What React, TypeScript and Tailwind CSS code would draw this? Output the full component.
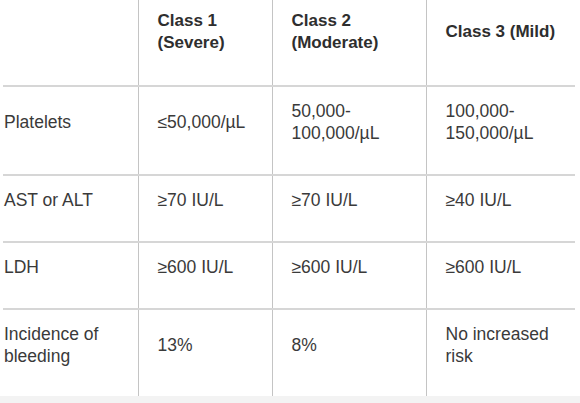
import React from 'react';

const rows = [
  { label: ['Platelets'], cells: [['≤50,000/µL'], ['50,000-', '100,000/µL'], ['100,000-', '150,000/µL']] },
  { label: ['AST or ALT'], cells: [['≥70 IU/L'], ['≥70 IU/L'], ['≥40 IU/L']] },
  { label: ['LDH'], cells: [['≥600 IU/L'], ['≥600 IU/L'], ['≥600 IU/L']] },
  { label: ['Incidence of', 'bleeding'], cells: [['13%'], ['8%'], ['No increased', 'risk']] },
];

const Lines = ({ lines }: { lines: string[] }) => (
  <p className="mb-4">
    {lines.map((l, i) => (
      <React.Fragment key={i}>
        {l}
        {i < lines.length - 1 && <br />}
      </React.Fragment>
    ))}
  </p>
);

const App = () => {
  return (
    <div className="w-[580px] h-[403px] bg-white overflow-hidden font-['Liberation_Sans',Arial,sans-serif] text-[#3a3a3a] text-[17.5px] leading-[22px]">
      <div className="pl-[3px] h-[396px]">
        <table className="w-[572px] table-fixed border-collapse">
          <colgroup>
            <col className="w-[135px]" />
            <col className="w-[134px]" />
            <col className="w-[154px]" />
            <col className="w-[149px]" />
          </colgroup>
          <thead>
            <tr className="border-b-2 border-[#d6d6d6]">
              <th className="h-[85px]" />
              {[['Class 1', '(Severe)'], ['Class 2', '(Moderate)'], ['Class 3 (Mild)']].map((h, i) => (
                <th
                  key={i}
                  className="h-[85px] pt-[10px] pb-[15px] pl-[19px] pr-1 text-left align-middle font-bold text-[17px] text-[#2e2e2e] border-l border-[#c4c4c4]"
                >
                  <Lines lines={h} />
                </th>
              ))}
            </tr>
          </thead>
          <tbody>
            {rows.map((r, ri) => (
              <tr
                key={ri}
                className={ri === rows.length - 1 ? 'border-b-2 border-[#b4b4b4]' : 'border-b-2 border-[#d6d6d6]'}
              >
                <td className="pt-[13px] pb-[14px] pl-px pr-2 align-middle">
                  <Lines lines={r.label} />
                </td>
                {r.cells.map((c, ci) => (
                  <td key={ci} className="pt-[13px] pb-[14px] pl-[19px] pr-2 align-middle border-l border-[#c4c4c4]">
                    <Lines lines={c} />
                  </td>
                ))}
              </tr>
            ))}
          </tbody>
        </table>
      </div>
      <div className="h-[7px] bg-[#f3f3f3]" />
    </div>
  );
};

export default App;
